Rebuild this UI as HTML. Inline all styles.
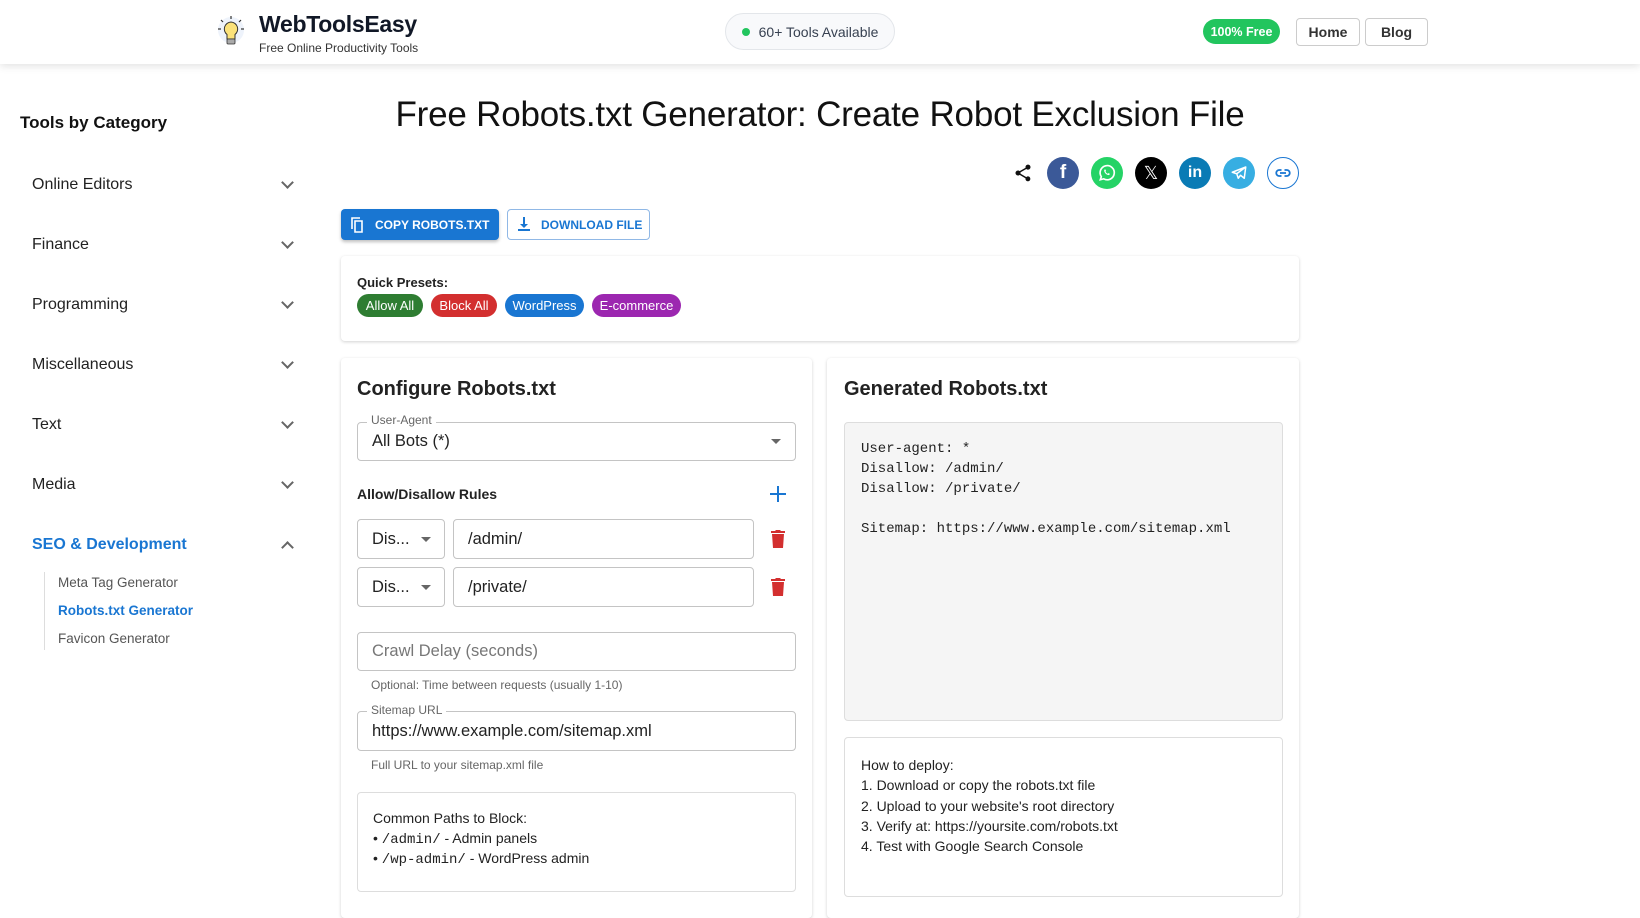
<!DOCTYPE html>
<html><head><meta charset="utf-8"><style>
*{box-sizing:border-box;margin:0;padding:0}
body{width:1640px;height:856px;overflow:hidden;background:#fff;font-family:"Liberation Sans",Arial,sans-serif;color:#212121;position:relative}
.a{position:absolute}
header{position:absolute;left:0;top:0;width:1640px;height:64px;background:#fff;box-shadow:0 2px 8px rgba(0,0,0,.12);z-index:2}
.btn{position:absolute;height:28px;border:1px solid #ccc;border-radius:4px;font-size:14px;font-weight:bold;display:flex;align-items:center;justify-content:center;color:#333;background:#fff}
.nav{font-size:16px;color:#222}
.chev{position:absolute;left:283px;width:9px;height:9px;border-right:2px solid #666;border-bottom:2px solid #666;transform:rotate(45deg)}
.card{position:absolute;background:#fff;border-radius:4px;box-shadow:0 1px 3px rgba(0,0,0,.18)}
.field{position:absolute;border:1px solid #c4c4c4;border-radius:4px;font-size:16.5px;color:#222;display:flex;align-items:center;padding-left:14px}
.lab{position:absolute;font-size:12px;color:#666;background:#fff;padding:0 4px}
.help{position:absolute;font-size:12px;color:#666}
.tri{position:absolute;width:0;height:0;border-left:5px solid transparent;border-right:5px solid transparent;border-top:5px solid #666}
.chip{position:absolute;top:294px;height:23px;border-radius:12px;color:#fff;font-size:13px;display:flex;align-items:center;justify-content:center}
.circ{position:absolute;top:157px;width:32px;height:32px;border-radius:50%;display:flex;align-items:center;justify-content:center}
.mono{font-family:"Liberation Mono",monospace}
</style></head><body>
<header>
<svg class="a" style="left:214px;top:14px" width="34" height="36" viewBox="0 0 34 36"><circle cx="17" cy="16" r="13" fill="#eef3fb"/><g stroke="#333" stroke-width="1.2"><line x1="17" y1="2" x2="17" y2="5"/><line x1="7" y1="6" x2="9" y2="8"/><line x1="27" y1="6" x2="25" y2="8"/><line x1="4" y1="15" x2="7" y2="15"/><line x1="30" y1="15" x2="27" y2="15"/></g><path d="M17 8a7 7 0 0 0-4 12.5V25h8v-4.5A7 7 0 0 0 17 8z" fill="#fbe27a" stroke="#333" stroke-width="1"/><rect x="13" y="25" width="8" height="5" rx="1" fill="#aaa" stroke="#333" stroke-width=".8"/></svg>
<div class="a" style="left:259px;top:11px;font-size:23px;font-weight:bold;color:#111827;letter-spacing:-.3px">WebToolsEasy</div>
<div class="a" style="left:259px;top:41px;font-size:12px;color:#333">Free Online Productivity Tools</div>
<div class="a" style="left:725px;top:13px;width:170px;height:37px;border:1px solid #e3e6ea;border-radius:19px;background:#f8f9fb;display:flex;align-items:center;justify-content:center;font-size:14px;color:#374151"><span style="width:8px;height:8px;border-radius:50%;background:#22c55e;margin-right:9px"></span>60+ Tools Available</div>
<div class="a" style="left:1203px;top:19px;width:77px;height:25px;border-radius:13px;background:#22c55e;color:#fff;font-size:12.5px;font-weight:bold;display:flex;align-items:center;justify-content:center">100% Free</div>
<div class="btn" style="left:1296px;top:18px;width:64px">Home</div>
<div class="btn" style="left:1365px;top:18px;width:63px">Blog</div>
</header>

<div class="a" style="left:20px;top:113px;font-size:17px;font-weight:bold;color:#111">Tools by Category</div>
<div class="a nav" style="left:32px;top:176px">Online Editors</div><div class="chev" style="top:178px"></div>
<div class="a nav" style="left:32px;top:236px">Finance</div><div class="chev" style="top:238px"></div>
<div class="a nav" style="left:32px;top:296px">Programming</div><div class="chev" style="top:298px"></div>
<div class="a nav" style="left:32px;top:356px">Miscellaneous</div><div class="chev" style="top:358px"></div>
<div class="a nav" style="left:32px;top:416px">Text</div><div class="chev" style="top:418px"></div>
<div class="a nav" style="left:32px;top:476px">Media</div><div class="chev" style="top:478px"></div>
<div class="a nav" style="left:32px;top:536px;color:#1976d2;font-weight:bold">SEO &amp; Development</div><div class="chev" style="top:543px;transform:rotate(-135deg)"></div>
<div class="a" style="left:44px;top:572px;width:1px;height:78px;background:#ddd"></div>
<div class="a" style="left:58px;top:575px;font-size:13.5px;color:#555">Meta Tag Generator</div>
<div class="a" style="left:58px;top:603px;font-size:13.5px;color:#1976d2;font-weight:bold">Robots.txt Generator</div>
<div class="a" style="left:58px;top:631px;font-size:13.5px;color:#555">Favicon Generator</div>

<div class="a" style="left:341px;width:958px;top:95px;text-align:center;font-size:35px;color:#111;letter-spacing:-.2px">Free Robots.txt Generator: Create Robot Exclusion File</div>

<svg class="a" style="left:1013px;top:163px" width="20" height="20" viewBox="0 0 24 24"><path fill="#111" d="M18 16.1c-.8 0-1.4.3-2 .8l-7.1-4.2c.1-.2.1-.5.1-.7s0-.5-.1-.7L16 7.2c.5.5 1.2.8 2 .8 1.7 0 3-1.3 3-3s-1.3-3-3-3-3 1.3-3 3c0 .2 0 .5.1.7L8 9.8C7.5 9.3 6.8 9 6 9c-1.7 0-3 1.3-3 3s1.3 3 3 3c.8 0 1.5-.3 2-.8l7.1 4.2c-.1.2-.1.4-.1.6 0 1.6 1.3 2.9 2.9 2.9s2.9-1.3 2.9-2.9-1.2-2.9-2.8-2.9z"/></svg>
<div class="circ" style="left:1047px;background:#3b5998;color:#fff;font-weight:bold;font-size:19px">f</div>
<div class="circ" style="left:1091px;background:#25d366"><svg width="20" height="20" viewBox="0 0 24 24"><path fill="none" stroke="#fff" stroke-width="2" d="M4 20l1.2-3.6A8.5 8.5 0 1 1 8 19z"/><path fill="#fff" d="M9 8c.4-.5 1-.4 1.2 0l.6 1.4-.6.9c.6 1.2 1.5 2 2.6 2.6l.9-.7 1.4.6c.3.3.3.8-.1 1.2-1 1-3 .4-4.6-1.2S8.2 9 9 8z"/></svg></div>
<div class="circ" style="left:1135px;background:#000;color:#fff;font-size:18px">𝕏</div>
<div class="circ" style="left:1179px;background:#0a7bb5;color:#fff;font-weight:bold;font-size:16px">in</div>
<div class="circ" style="left:1223px;background:#37aee2"><svg width="18" height="18" viewBox="0 0 24 24"><path fill="none" stroke="#fff" stroke-width="2" stroke-linejoin="round" d="M21 4L3 11l6 2 2 6 3-4 5 4z M9 13l12-9"/></svg></div>
<div class="circ" style="left:1267px;border:1px solid #1976d2;background:#fff"><svg width="18" height="18" viewBox="0 0 24 24"><path fill="none" stroke="#1976d2" stroke-width="2.4" d="M10 8H7a4 4 0 0 0 0 8h3M14 8h3a4 4 0 0 1 0 8h-3M8 12h8"/></svg></div>

<div class="a" style="left:341px;top:209px;width:158px;height:31px;background:#1976d2;border-radius:4px;box-shadow:0 2px 3px rgba(0,0,0,.25);color:#fff;font-size:12px;font-weight:bold;display:flex;align-items:center;padding-left:34px;white-space:nowrap">COPY ROBOTS.TXT</div>
<svg class="a" style="left:349px;top:216px" width="16" height="17" viewBox="0 0 16 17"><path fill="none" stroke="#fff" stroke-width="1.6" d="M3 13V2h8M6 5h7v11H6z"/></svg>
<div class="a" style="left:507px;top:209px;width:143px;height:31px;border:1px solid #90b8e6;border-radius:4px;color:#1976d2;font-size:12px;font-weight:bold;display:flex;align-items:center;padding-left:33px;white-space:nowrap">DOWNLOAD FILE</div>
<svg class="a" style="left:518px;top:217px" width="12" height="14" viewBox="0 0 12 14"><path fill="#1976d2" d="M5 0h2v7h3L6 11 2 7h3zM0 12h12v2H0z"/></svg>

<div class="card" style="left:341px;top:256px;width:958px;height:85px"></div>
<div class="a" style="left:357px;top:275px;font-size:13px;font-weight:bold;color:#222">Quick Presets:</div>
<div class="chip" style="left:357px;width:66px;background:#2e7d32">Allow All</div>
<div class="chip" style="left:431px;width:66px;background:#d32f2f">Block All</div>
<div class="chip" style="left:505px;width:79px;background:#1976d2">WordPress</div>
<div class="chip" style="left:592px;width:89px;background:#9c27b0">E-commerce</div>

<div class="card" style="left:341px;top:358px;width:471px;height:560px"></div>
<div class="a" style="left:357px;top:378px;font-size:20px;font-weight:bold;color:#222">Configure Robots.txt</div>
<div class="field" style="left:357px;top:422px;width:439px;height:39px">All Bots (*)</div>
<div class="lab" style="left:367px;top:413px">User-Agent</div>
<div class="tri" style="left:771px;top:439px"></div>
<div class="a" style="left:357px;top:486px;font-size:14px;font-weight:bold;color:#222">Allow/Disallow Rules</div>
<svg class="a" style="left:770px;top:486px" width="16" height="16"><path stroke="#1976d2" stroke-width="2" d="M8 0v16M0 8h16"/></svg>
<div class="field" style="left:357px;top:519px;width:88px;height:40px">Dis...</div><div class="tri" style="left:421px;top:537px"></div>
<div class="field" style="left:453px;top:519px;width:301px;height:40px">/admin/</div>
<svg class="a" style="left:771px;top:530px" width="14" height="18" viewBox="0 0 14 18"><path fill="#d32f2f" d="M1 4h12l-1 14H2zM0 1h4l1-1h4l1 1h4v2H0z"/></svg>
<div class="field" style="left:357px;top:567px;width:88px;height:40px">Dis...</div><div class="tri" style="left:421px;top:585px"></div>
<div class="field" style="left:453px;top:567px;width:301px;height:40px">/private/</div>
<svg class="a" style="left:771px;top:578px" width="14" height="18" viewBox="0 0 14 18"><path fill="#d32f2f" d="M1 4h12l-1 14H2zM0 1h4l1-1h4l1 1h4v2H0z"/></svg>
<div class="field" style="left:357px;top:632px;width:439px;height:39px;color:#777">Crawl Delay (seconds)</div>
<div class="help" style="left:371px;top:678px">Optional: Time between requests (usually 1-10)</div>
<div class="field" style="left:357px;top:711px;width:439px;height:40px">https://www.example.com/sitemap.xml</div>
<div class="lab" style="left:367px;top:703px">Sitemap URL</div>
<div class="help" style="left:371px;top:758px">Full URL to your sitemap.xml file</div>
<div class="a" style="left:357px;top:792px;width:439px;height:100px;border:1px solid #ddd;border-radius:4px"></div>
<div class="a" style="left:373px;top:810px;font-size:14px;color:#222">Common Paths to Block:</div>
<div class="a" style="left:373px;top:830px;font-size:14px;color:#222">• <span class="mono">/admin/</span> - Admin panels</div>
<div class="a" style="left:373px;top:850px;font-size:14px;color:#222">• <span class="mono">/wp-admin/</span> - WordPress admin</div>

<div class="card" style="left:827px;top:358px;width:472px;height:560px"></div>
<div class="a" style="left:844px;top:378px;font-size:20px;font-weight:bold;color:#222">Generated Robots.txt</div>
<div class="a mono" style="left:844px;top:422px;width:439px;height:299px;border:1px solid #ddd;border-radius:4px;background:#f5f5f5;padding:16px 16px;font-size:14px;line-height:20px;white-space:pre;color:#222">User-agent: *
Disallow: /admin/
Disallow: /private/

Sitemap: https://www.example.com/sitemap.xml</div>
<div class="a" style="left:844px;top:737px;width:439px;height:160px;border:1px solid #ddd;border-radius:4px;padding:17px 16px;font-size:14px;line-height:20.3px;color:#222">How to deploy:<br>1. Download or copy the robots.txt file<br>2. Upload to your website's root directory<br>3. Verify at: https://yoursite.com/robots.txt<br>4. Test with Google Search Console</div>
</body></html>
